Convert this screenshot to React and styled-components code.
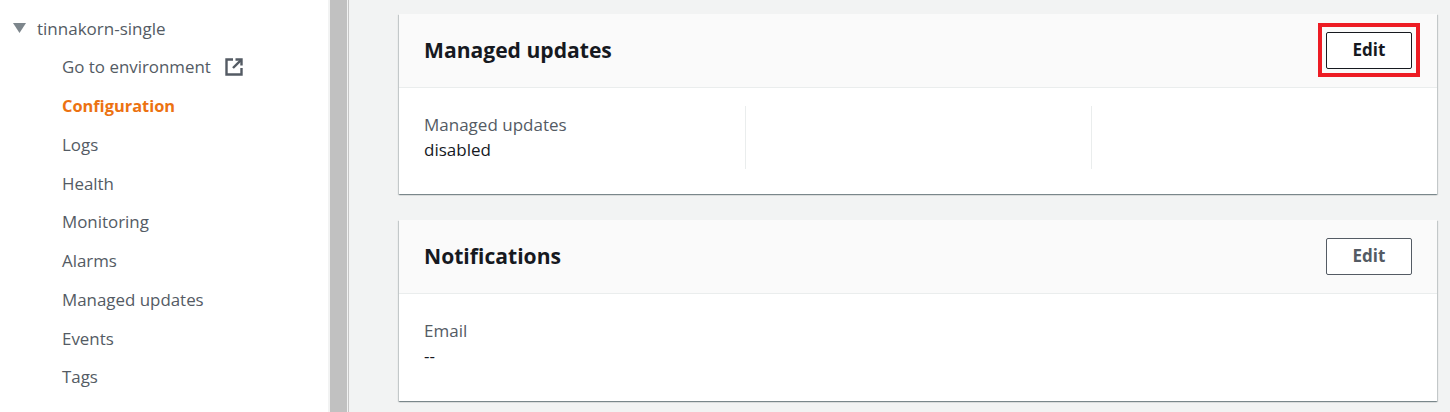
import React from "react";
import styled, { createGlobalStyle } from "styled-components";

const Global = createGlobalStyle`
  html, body { margin: 0; padding: 0; background: #f2f3f3; }
  body { font-family: "Open Sans", "Noto Sans", Arial, sans-serif; overflow: hidden; }
  * { box-sizing: border-box; }
`;

const Page = styled.div`
  display: flex;
  width: 1450px;
  height: 412px;
  overflow: hidden;
  background: #f2f3f3;
`;

const Sidebar = styled.nav`
  width: 328px;
  flex: none;
  background: #fff;
  padding-top: 8.85px;
`;

const TreeHead = styled.div`
  display: flex;
  align-items: center;
  height: 38.75px;
  padding-left: 13px;
  color: #545b64;
  font-size: 17px;
`;

const Caret = styled.svg`
  width: 13px;
  height: 10px;
  margin-right: 11px;
  flex: none;
`;

const NavItem = styled.a`
  display: flex;
  align-items: center;
  height: 38.75px;
  padding-left: 62px;
  font-size: ${(p) => (p.$active ? "16.4px" : "16.9px")};
  color: ${(p) => (p.$active ? "#ec7211" : "#545b64")};
  font-weight: ${(p) => (p.$active ? 700 : 400)};
`;

const ExternalIcon = styled.svg`
  width: 18px;
  height: 18px;
  margin-left: 14px;
  flex: none;
`;

const Rail = styled.div`
  width: 21px;
  flex: none;
  background: #f2f3f3;
  padding-left: 2px;
  border-right: 1px solid #c6c6c6;
`;

const RailThumb = styled.div`
  width: 17px;
  height: 100%;
  background: #c1c1c1;
`;

const Main = styled.main`
  flex: 1;
  padding: 14px 13px 0 50px;
  display: flex;
  flex-direction: column;
  gap: 26px;
`;

const Card = styled.section`
  background: #fff;
  height: ${(p) => p.$h}px;
  flex: none;
  box-shadow: 0 1px 1px 0 rgba(0, 28, 36, 0.3), 1px 1px 1px 0 rgba(0, 28, 36, 0.15), -1px 1px 1px 0 rgba(0, 28, 36, 0.15);
`;

const CardHeader = styled.header`
  height: 74px;
  display: flex;
  align-items: center;
  justify-content: space-between;
  padding: 0 25px;
  background: #fafafa;
  border-bottom: 1px solid #eaeded;
`;

const Title = styled.h2`
  margin: 0;
  padding-bottom: 2px;
  font-size: 21.1px;
  font-weight: 700;
  color: #16191f;
`;

const Highlight = styled.div`
  border: 4px solid ${(p) => (p.$on ? "#ed1c24" : "transparent")};
  padding: 5px 4px 4px;
  margin: -9px -8px -8px;
`;

const EditButton = styled.button`
  display: block;
  width: 86px;
  height: 37px;
  background: #fff;
  border: 1px solid ${(p) => (p.$dark ? "#16191f" : "#545b64")};
  border-radius: 2px;
  color: ${(p) => (p.$dark ? "#16191f" : "#545b64")};
  font: 700 17px "Open Sans", "Noto Sans", Arial, sans-serif;
  padding: 0 0 2px;
`;

const CardBody = styled.div`
  display: grid;
  grid-template-columns: repeat(3, 1fr);
  padding-top: 18px;
`;

const Col = styled.div`
  height: 63px;
  padding: 6px 25px 0;
  border-left: ${(p) => (p.$divided ? "1px solid #eaeded" : "none")};
`;

const Label = styled.div`
  font-size: 17px;
  line-height: 25px;
  color: #545b64;
`;

const Value = styled.div`
  font-size: 17px;
  line-height: 25px;
  color: #16191f;
`;

const items = ["Logs", "Health", "Monitoring", "Alarms", "Managed updates", "Events", "Tags"];

export default function App() {
  return (
    <Page>
      <Global />
      <Sidebar>
        <TreeHead>
          <Caret viewBox="0 0 13 10">
            <path d="M0 0h13L6.5 10z" fill="#7d868c" />
          </Caret>
          tinnakorn-single
        </TreeHead>
        <NavItem>
          Go to environment
          <ExternalIcon viewBox="0 0 18 18" fill="none" stroke="#545b64" strokeWidth="2.4">
            <path d="M8 1.5H1.5v15h15V10" />
            <path d="M10.5 1.5h6V7.5" />
            <path d="M16.2 1.8L8 10" />
          </ExternalIcon>
        </NavItem>
        <NavItem $active>Configuration</NavItem>
        {items.map((t) => (
          <NavItem key={t}>{t}</NavItem>
        ))}
      </Sidebar>
      <Rail>
        <RailThumb />
      </Rail>
      <Main>
        <Card $h={180}>
          <CardHeader>
            <Title>Managed updates</Title>
            <Highlight $on>
              <EditButton $dark>Edit</EditButton>
            </Highlight>
          </CardHeader>
          <CardBody>
            <Col>
              <Label>Managed updates</Label>
              <Value>disabled</Value>
            </Col>
            <Col $divided />
            <Col $divided />
          </CardBody>
        </Card>
        <Card $h={181}>
          <CardHeader>
            <Title>Notifications</Title>
            <EditButton>Edit</EditButton>
          </CardHeader>
          <CardBody>
            <Col>
              <Label>Email</Label>
              <Value>--</Value>
            </Col>
          </CardBody>
        </Card>
      </Main>
    </Page>
  );
}
